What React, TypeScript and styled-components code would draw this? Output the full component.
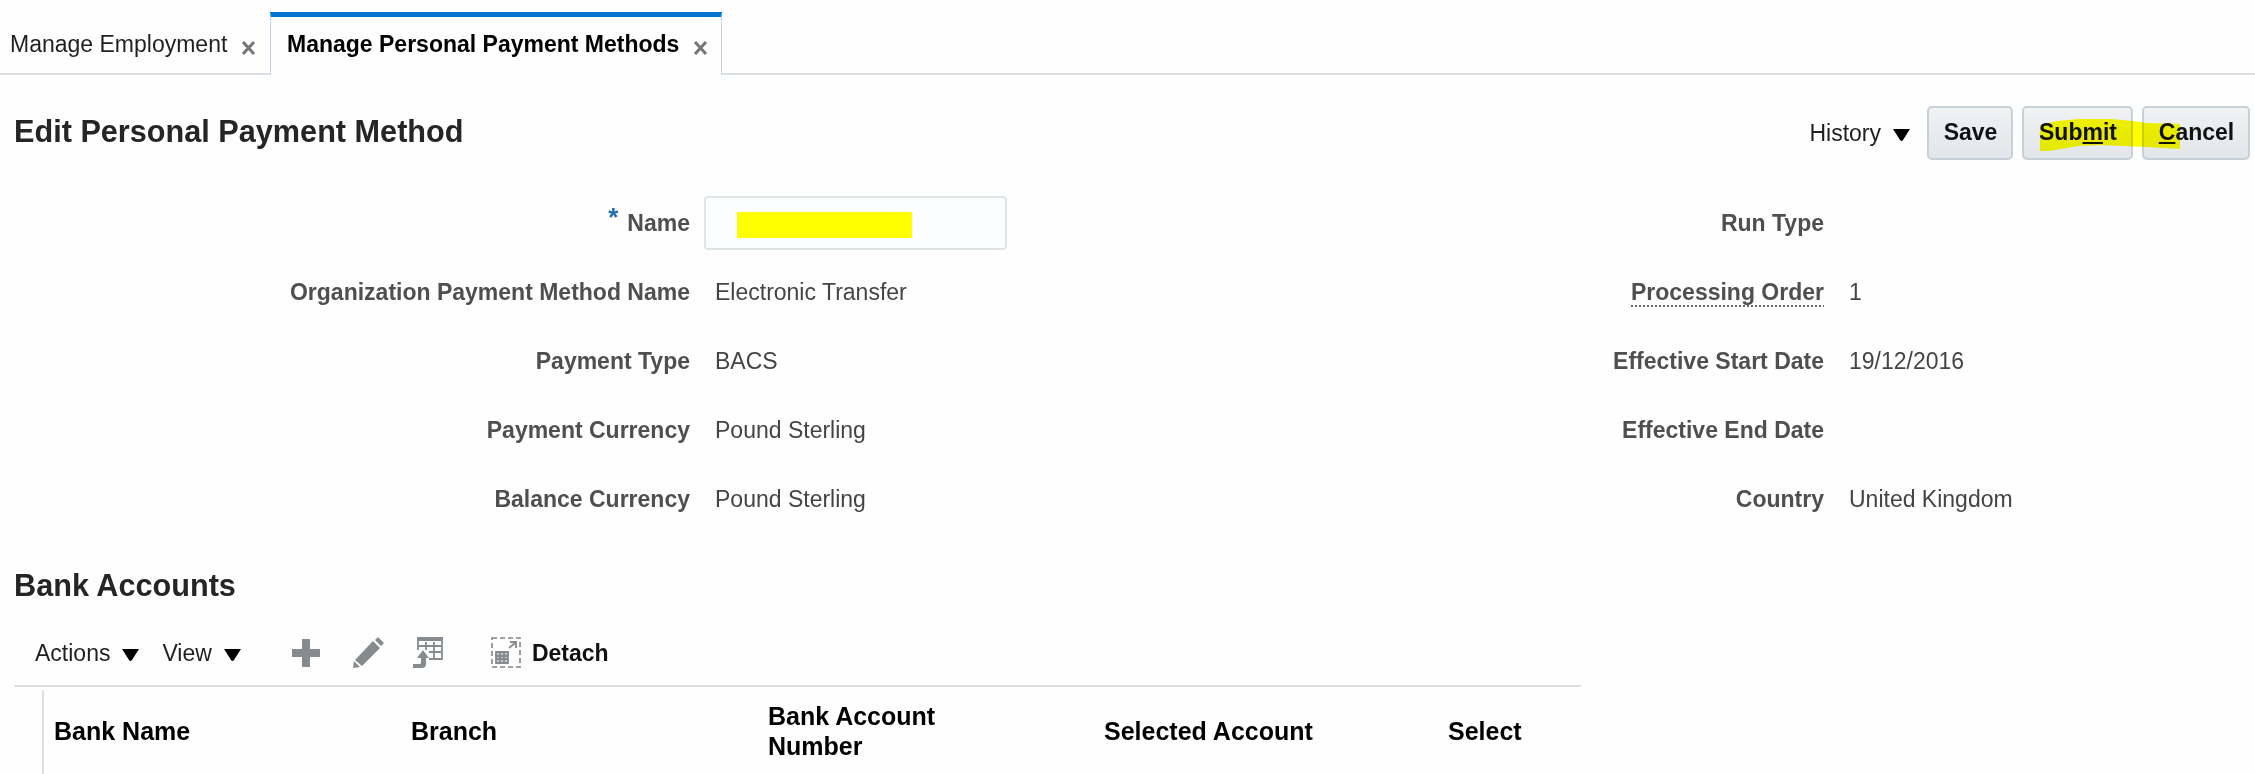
import React from "react";
import styled, { createGlobalStyle, css } from "styled-components";

const Global = createGlobalStyle`
  *, *::before, *::after { box-sizing: border-box; }
  body { margin: 0; background: #fefefe; overflow: hidden; }
`;

const Page = styled.main`
  width: 2255px;
  height: 774px;
  overflow: hidden;
  background: #fefefe;
  color: #1f1f1f;
  font: 23px/30px "Liberation Sans", Arial, sans-serif;
`;

const TabBar = styled.nav`
  display: flex;
  height: 75px;
  padding-top: 12px;
`;

const Tab = styled.div<{ $active?: boolean; $width: number }>`
  display: flex;
  flex: none;
  width: ${(p) => p.$width}px;
  padding: 17px 0 0 10px;
  border-bottom: 2px solid #d9dfe3;
  white-space: nowrap;
  ${(p) =>
    p.$active &&
    css`
      padding: 12px 0 0 16px;
      border: solid #c6d3e0;
      border-width: 0 1px;
      border-top: 5px solid #0572ce;
      color: #000;
      font-weight: bold;
    `}
`;

const TabLabel = styled.span<{ $width: number }>`
  width: ${(p) => p.$width}px;
`;

const TabRest = styled.div`
  flex: 1;
  border-bottom: 2px solid #d9dfe3;
`;

const CloseIcon = styled.svg`
  width: 15px;
  height: 14px;
  margin-top: 12px;
`;

const TitleBar = styled.header`
  display: flex;
  align-items: center;
  justify-content: space-between;
  height: 54px;
  margin: 31px 5px 0 14px;
`;

const Heading = styled.h1`
  margin: 0;
  color: #252525;
  font-size: 30.65px;
  line-height: 36px;
  white-space: nowrap;
`;

const PageTitle = styled(Heading)`
  padding-bottom: 4px;
`;

const Actions = styled.div`
  position: relative;
  display: flex;
  gap: 9px;
  align-items: center;
`;

const MenuButton = styled.button<{ $after?: number; $gap?: number }>`
  display: flex;
  align-items: center;
  gap: ${(p) => p.$gap ?? 12}px;
  margin: 0 ${(p) => p.$after ?? 0}px 0 0;
  padding: 0 0 1px;
  border: 0;
  background: none;
  color: #1f1f1f;
  font: inherit;
`;

const Caret = styled.svg`
  width: 17px;
  height: 12px;
  margin-top: 4px;
`;

const Button = styled.button<{ $width: number }>`
  width: ${(p) => p.$width}px;
  height: 54px;
  padding: 0 0 2px 1px;
  border: 2px solid #c8d1d9;
  border-radius: 5px;
  background: linear-gradient(#f0f2f4, #e2e6ea);
  color: #111;
  font: bold 23px/30px "Liberation Sans", Arial, sans-serif;
`;

const Key = styled.span`
  text-decoration: underline;
  text-decoration-thickness: 2px;
  text-underline-offset: 2px;
`;

const Marker = styled.svg`
  position: absolute;
  top: 11px;
  right: 69px;
  width: 142px;
  height: 36px;
  mix-blend-mode: multiply;
  pointer-events: none;
`;

const Form = styled.section`
  display: grid;
  grid-template-columns: 1133px 1fr;
  margin-top: 28px;
`;

const Column = styled.div``;

const Field = styled.div<{ $label: number }>`
  display: grid;
  grid-template-columns: ${(p) => p.$label}px 1fr;
  align-items: center;
  height: 69px;
  white-space: nowrap;
`;

const Label = styled.label`
  color: #4f4f4f;
  font-weight: bold;
  text-align: right;
`;

const Hint = styled.span`
  background: repeating-linear-gradient(90deg, #666 0 2px, transparent 2px 4px) left bottom / 100% 2px no-repeat;
  padding-bottom: 2px;
`;

const Required = styled.span`
  position: relative;
  top: -5px;
  margin-right: 9px;
  color: #1e6cb5;
  font-size: 26px;
  line-height: 20px;
`;

const Value = styled.span`
  padding-left: 25px;
  color: #444;
`;

const NameBox = styled.div`
  width: 303px;
  height: 54px;
  margin-left: 14px;
  padding: 14px 0 0 31px;
  border: 2px solid #dfe4e7;
  border-radius: 4px;
  background: #fcfdfe;
`;

const Redaction = styled.div`
  width: 175px;
  height: 26px;
  background: #ff0;
`;

const Accounts = styled.section`
  width: 1567px;
  margin: 34px 0 0 14px;
`;

const Toolbar = styled.div`
  display: flex;
  align-items: center;
  height: 64px;
  margin-top: 18px;
  padding-left: 21px;
`;

const ToolIcon = styled.svg<{ $after: number }>`
  flex: none;
  margin-right: ${(p) => p.$after}px;
`;

const Detach = styled.span`
  padding-bottom: 1px;
  color: #111;
  font-weight: bold;
`;

const TableHead = styled.div`
  border-top: 2px solid #d9dfe3;
  padding: 3px 0 0 28px;
`;

const HeadRow = styled.div`
  display: grid;
  grid-template-columns: 357px 357px 336px 344px 1fr;
  align-items: center;
  height: 90px;
  padding: 0 0 8px 10px;
  border-left: 2px solid #d9dfe3;
  color: #000;
  font-size: 25px;
  font-weight: bold;
`;

const HeadCell = styled.div<{ $max?: number }>`
  max-width: ${(p) => (p.$max ? `${p.$max}px` : "none")};
`;

const Close = () => (
  <CloseIcon viewBox="0 0 15 14">
    <path d="M2 1L13 13M13 1L2 13" stroke="#777" strokeWidth="3" />
  </CloseIcon>
);

const Down = () => (
  <Caret viewBox="0 0 17 12">
    <path d="M0 0H17L10 11Q8.5 13 7 11Z" fill="#000" />
  </Caret>
);

const left = [
  ["Organization Payment Method Name", "Electronic Transfer"],
  ["Payment Type", "BACS"],
  ["Payment Currency", "Pound Sterling"],
  ["Balance Currency", "Pound Sterling"],
];

const right = [
  ["Run Type", ""],
  ["Processing Order", "1"],
  ["Effective Start Date", "19/12/2016"],
  ["Effective End Date", ""],
  ["Country", "United Kingdom"],
];

export default function App() {
  return (
    <Page>
      <Global />
      <TabBar>
        <Tab $width={270}>
          <TabLabel $width={231}>Manage Employment</TabLabel>
          <Close />
        </Tab>
        <Tab $active $width={452}>
          <TabLabel $width={406}>Manage Personal Payment Methods</TabLabel>
          <Close />
        </Tab>
        <TabRest />
      </TabBar>
      <TitleBar>
        <PageTitle>Edit Personal Payment Method</PageTitle>
        <Actions>
          <MenuButton $after={8}>
            History <Down />
          </MenuButton>
          <Button $width={86}>Save</Button>
          <Button $width={111}>
            Sub<Key>m</Key>it
          </Button>
          <Button $width={108}>
            <Key>C</Key>ancel
          </Button>
          <Marker viewBox="0 0 142 36">
            <path d="M1 8L18 4L40 2H72L94 4L108 6L141 7V32L108 30L84 29L60 28L40 29L22 32L10 34H1Z" fill="#ff0" />
          </Marker>
        </Actions>
      </TitleBar>
      <Form>
        <Column>
          <Field $label={690}>
            <Label>
              <Required>*</Required>Name
            </Label>
            <NameBox>
              <Redaction />
            </NameBox>
          </Field>
          {left.map(([label, value]) => (
            <Field $label={690} key={label}>
              <Label>{label}</Label>
              <Value>{value}</Value>
            </Field>
          ))}
        </Column>
        <Column>
          {right.map(([label, value]) => (
            <Field $label={691} key={label}>
              <Label>{label === "Processing Order" ? <Hint>{label}</Hint> : label}</Label>
              <Value>{value}</Value>
            </Field>
          ))}
        </Column>
      </Form>
      <Accounts>
        <Heading as="h2">Bank Accounts</Heading>
        <Toolbar>
          <MenuButton $after={23}>
            Actions <Down />
          </MenuButton>
          <MenuButton $after={51}>
            View <Down />
          </MenuButton>
          <ToolIcon $after={32} width="28" height="28" viewBox="0 0 28 28">
            <path d="M10 0H18V10H28V18H18V28H10V18H0V10H10Z" fill="#858b8f" />
          </ToolIcon>
          <ToolIcon $after={29} width="32" height="32" viewBox="0 0 32 32">
            <path d="M1 31L2 24L8 30ZM3 23L21 4L28 11L10 29ZM23 3L26 0L32 6L29 9Z" fill="#858b8f" />
          </ToolIcon>
          <ToolIcon $after={48} width="30" height="32" viewBox="0 0 30 32">
            <path d="M4 1H29V22H16M5 2V13M13 5V13M21 5V21M12 9H28M5 9H12M16 15H28" fill="none" stroke="#858b8f" strokeWidth="1.8" />
            <path d="M4 0H30V4H4ZM10 13L16 21H13V27Q13 31 9 31H0V27H7Q8 27 8 25V21H4Z" fill="#858b8f" />
          </ToolIcon>
          <ToolIcon $after={11} width="30" height="32" viewBox="0 0 30 32">
            <path d="M1 1H29V30H1Z" fill="none" stroke="#858585" strokeWidth="1.6" strokeDasharray="5 3" />
            <path d="M5 15H17V26H5Z" fill="#c5c8ca" />
            <path d="M5 15H17V26H5ZM9 15V26M13 15V26M5 19H17M5 22H17M18 11L24 6M19 5H25V11" fill="none" stroke="#858b8f" strokeWidth="1.8" />
          </ToolIcon>
          <Detach>Detach</Detach>
        </Toolbar>
        <TableHead>
          <HeadRow>
            <HeadCell>Bank Name</HeadCell>
            <HeadCell>Branch</HeadCell>
            <HeadCell $max={180}>Bank Account Number</HeadCell>
            <HeadCell>Selected Account</HeadCell>
            <HeadCell>Select</HeadCell>
          </HeadRow>
        </TableHead>
      </Accounts>
    </Page>
  );
}
